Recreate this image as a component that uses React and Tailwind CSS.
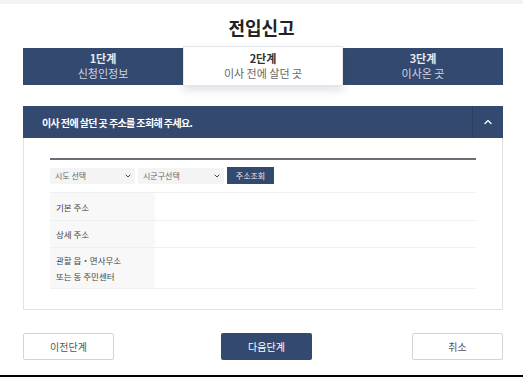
import { ChevronUp, ChevronDown } from 'lucide-react';

const steps = [
    { id: 1, title: '1단계', desc: '신청인정보' },
    { id: 2, title: '2단계', desc: '이사 전에 살던 곳' },
    { id: 3, title: '3단계', desc: '이사온 곳' }
];

const rows = [
    { label: ['기본 주소'], h: 'h-[28px]' },
    { label: ['상세 주소'], h: 'h-[27px]' },
    { label: ['관할 읍・면사무소', '또는 동 주민센터'], h: 'h-[41px]' }
];

const activeStep = 2;

export default function App() {
    return (
        <div
            className="w-[523px] h-[378px] bg-white flex flex-col overflow-hidden"
            style={{ fontFamily: '"Noto Sans CJK KR", "Noto Sans", sans-serif' }}
        >
            <div className="h-[4px] bg-[#f3f2f4] shrink-0" />

            <h1 className="mt-[12px] h-[22px] text-center text-[18px] leading-[22px] font-bold text-[#222]">
                전입신고
            </h1>

            {/* steps */}
            <div className="mt-[8px] ml-[23px] w-[480px] flex items-center h-[40px]">
                {steps.map(step =>
                    step.id === activeStep ? (
                        <div
                            key={step.id}
                            className="w-[160px] h-[40px] bg-white border border-[#e4e6ea] shadow-[0_4px_8px_rgba(40,50,80,0.15)] flex flex-col items-center justify-center z-10"
                        >
                            <span className="text-[11px] leading-[15px] font-bold text-[#333]">{step.title}</span>
                            <span className="text-[11px] leading-[15px] text-[#666]">{step.desc}</span>
                        </div>
                    ) : (
                        <div
                            key={step.id}
                            className="w-[160px] h-[37px] bg-[#34496f] flex flex-col items-center justify-center"
                        >
                            <span className="text-[11px] leading-[15px] font-bold text-[#e6e9f0]">{step.title}</span>
                            <span className="text-[11px] leading-[15px] text-[#cfd5e2]">{step.desc}</span>
                        </div>
                    )
                )}
            </div>

            {/* section */}
            <div className="mt-[20px] ml-[23px] w-[480px]">
                <div className="h-[32px] bg-[#34496f] flex items-center">
                    <span className="flex-1 pl-[19px] text-[10px] font-bold text-white tracking-[-0.6px]">
                        이사 전에 살던 곳 주소를 조회해 주세요.
                    </span>
                    <div className="w-[31px] h-full border-l border-[#2c3f60] flex items-center justify-center">
                        <ChevronUp size={12} strokeWidth={2.5} className="text-white" />
                    </div>
                </div>

                <div className="h-[172px] border border-t-0 border-[#e2e2e2] px-[26px] pt-[20px]">
                    <div className="h-[2px] bg-[#6b6e76]" />

                    <div className="mt-[7px] flex items-center gap-[3px]">
                        <div className="w-[85px] h-[16px] bg-[#f4f4f4] flex items-center justify-between pl-[5px] pr-[3px]">
                            <span className="text-[8px] text-[#666]">시도 선택</span>
                            <ChevronDown size={8} strokeWidth={3} className="text-[#444]" />
                        </div>
                        <div className="w-[86px] h-[16px] bg-[#f4f4f4] flex items-center justify-between pl-[5px] pr-[3px]">
                            <span className="text-[8px] text-[#666]">시군구선택</span>
                            <ChevronDown size={8} strokeWidth={3} className="text-[#444]" />
                        </div>
                        <div className="w-[47px] h-[17px] bg-[#34496f] flex items-center justify-center">
                            <span className="text-[8px] text-[#e8ebf2]">주소조회</span>
                        </div>
                    </div>

                    <div className="mt-[8px] border-t border-[#f0f0f0]">
                        {rows.map((row, i) => (
                            <div key={i} className={`flex ${row.h} border-b border-[#f0f0f0]`}>
                                <div className="w-[105px] bg-[#f8f8f8] flex flex-col justify-center pl-[6px]">
                                    {row.label.map(line => (
                                        <span key={line} className="text-[8.5px] leading-[16px] text-[#444]">
                                            {line}
                                        </span>
                                    ))}
                                </div>
                                <div className="flex-1" />
                            </div>
                        ))}
                    </div>
                </div>
            </div>

            {/* buttons */}
            <div className="mt-[23px] ml-[23px] w-[480px] flex">
                <button className="w-[91px] h-[27px] bg-white border border-[#d4d4d4] rounded-[2px] text-[10px] text-[#555]">
                    이전단계
                </button>
                <button className="ml-[107px] w-[91px] h-[27px] bg-[#34496f] rounded-[2px] text-[10px] text-white">
                    다음단계
                </button>
                <button className="ml-auto w-[91px] h-[27px] bg-white border border-[#d4d4d4] rounded-[2px] text-[10px] text-[#555]">
                    취소
                </button>
            </div>

            <div className="mt-auto mb-[1px] h-[2px] bg-black shrink-0" />
        </div>
    );
}
